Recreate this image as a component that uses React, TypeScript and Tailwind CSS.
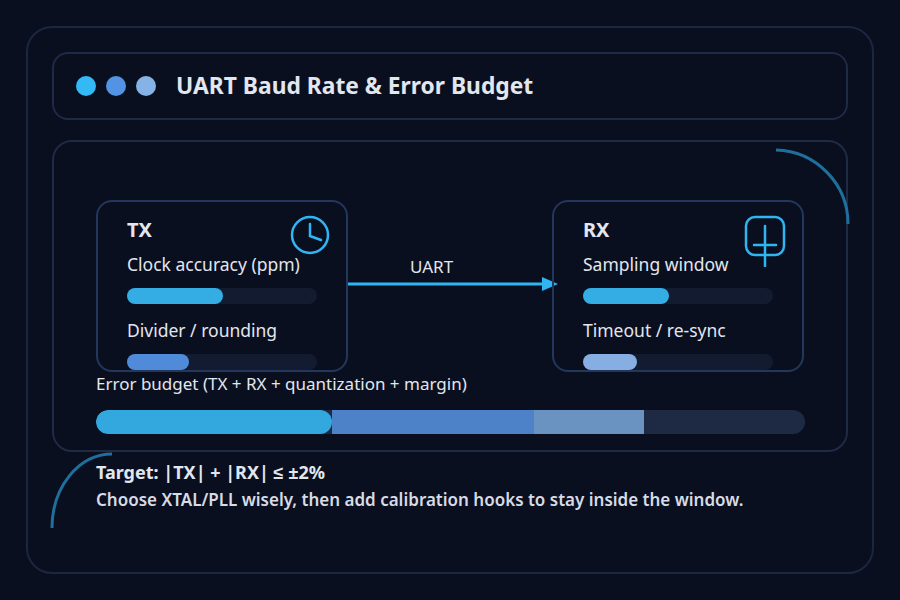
import React from 'react';

const Bar = ({ w, color }: { w: number; color: string }) => (
  <div className="h-4 w-[190px] rounded-full bg-[#131b30]">
    <div className={`h-4 rounded-full ${color}`} style={{ width: w }} />
  </div>
);

export default function App() {
  return (
    <div className="w-[900px] h-[600px] bg-[#0a0f1f] p-[26px] font-['DejaVu_Sans',sans-serif] text-[#e2e6ee]">
      <div className="relative w-full h-full rounded-[26px] border-2 border-[#1b2640] px-6 pt-6">
        <div className="flex items-center h-[68px] rounded-[16px] border-2 border-[#1e2a46] pl-[22px]">
          <span className="w-5 h-5 rounded-full bg-[#33b9f5]" />
          <span className="ml-[10px] w-5 h-5 rounded-full bg-[#5294e3]" />
          <span className="ml-[10px] w-5 h-5 rounded-full bg-[#86b3e6]" />
          <span className="ml-[20px] text-[22.8px] font-bold">UART Baud Rate &amp; Error Budget</span>
        </div>

        <div className="mt-5 h-[312px] rounded-[20px] border-2 border-[#1e2a46] px-[42px] pt-[58px]">
          <div className="flex items-start">
            <div className="relative w-[252px] h-[172px] overflow-hidden rounded-[16px] border-2 border-[#24365c] pl-[29px] pt-[16px]">
              <div className="text-[20px] font-bold leading-6">TX</div>
              <svg className="absolute right-[16px] top-[13px]" width="40" height="40" viewBox="0 0 40 40" fill="none" stroke="#2fb6f2" strokeWidth="2.5" strokeLinecap="round">
                <circle cx="20" cy="20" r="18" />
                <path d="M20 9v12l11 4" />
              </svg>
              <div className="mt-[12px] text-[17.5px] leading-5">Clock accuracy (ppm)</div>
              <div className="mt-[14px]"><Bar w={96} color="bg-[#33ade3]" /></div>
              <div className="mt-[16px] text-[17.5px] leading-5">Divider / rounding</div>
              <div className="mt-[14px]"><Bar w={62} color="bg-[#508bd9]" /></div>
            </div>

            <div className="relative flex-1 h-[172px]">
              <div className="absolute left-[62px] top-[54px] text-[17px]">UART</div>
              <svg className="absolute left-0 top-[76px]" width="210" height="16" viewBox="0 0 210 16">
                <path d="M0 8h196" stroke="#2fb6f2" strokeWidth="3" />
                <path d="M194 1l16 7-16 7z" fill="#2fb6f2" />
              </svg>
            </div>

            <div className="relative w-[252px] h-[172px] overflow-hidden rounded-[16px] border-2 border-[#24365c] pl-[29px] pt-[16px]">
              <div className="text-[20px] font-bold leading-6">RX</div>
              <svg className="absolute right-[16px] top-[13px]" width="42" height="52" viewBox="0 0 42 52" fill="none" stroke="#2fb6f2" strokeWidth="2.5" strokeLinecap="round">
                <rect x="2" y="2" width="38" height="38" rx="9" />
                <path d="M21 11v40M10 30h22" />
              </svg>
              <div className="mt-[12px] text-[17.5px] leading-5">Sampling window</div>
              <div className="mt-[14px]"><Bar w={86} color="bg-[#33ade3]" /></div>
              <div className="mt-[16px] text-[17.5px] leading-5">Timeout / re-sync</div>
              <div className="mt-[14px]"><Bar w={54} color="bg-[#86aee3]" /></div>
            </div>
          </div>

          <div className="mt-[2px] text-[17px] leading-5">Error budget (TX + RX + quantization + margin)</div>
          <div className="mt-[16px] flex h-6 w-[709px] overflow-hidden rounded-full bg-[#1e2a44]">
            <div className="w-[236px] rounded-full bg-[#33a8df]" />
            <div className="w-[202px] bg-[#4d82c9]" />
            <div className="w-[110px] bg-[#6b93c1]" />
          </div>
        </div>

        <div className="mt-[8px] pl-[44px]">
          <div className="text-[18px] font-bold leading-6">Target: |TX| + |RX| ≤ ±2%</div>
          <div className="mt-[6px] text-[17px] font-semibold leading-5 text-[#d6dbe5]">Choose XTAL/PLL wisely, then add calibration hooks to stay inside the window.</div>
        </div>

        <svg className="absolute left-[746px] top-[120px]" width="80" height="80" viewBox="0 0 80 80" fill="none">
          <path d="M2 2A74 74 0 0 1 74 76" stroke="#1f6f9c" strokeWidth="3" />
        </svg>
        <svg className="absolute left-[22px] top-[424px]" width="64" height="80" viewBox="0 0 64 80" fill="none">
          <path d="M62 2A60 74 0 0 0 2 76" stroke="#1f6f9c" strokeWidth="3" />
        </svg>
      </div>
    </div>
  );
}
